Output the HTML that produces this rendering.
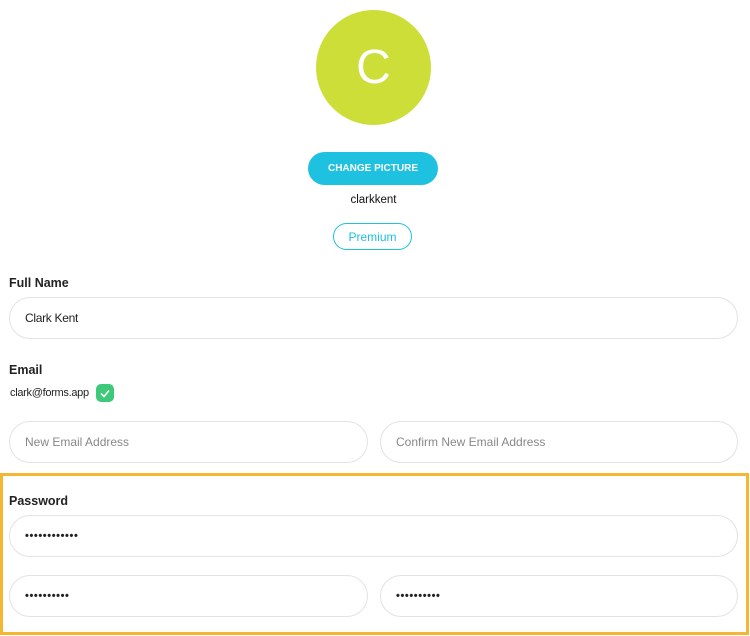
<!DOCTYPE html><html><head><style>
body{margin:0;width:750px;height:636px;background:#fff;font-family:"Liberation Sans",sans-serif;position:relative;overflow:hidden}
.a{position:absolute}
.in{position:absolute;border:1px solid #e3e3e3;border-radius:22px;box-sizing:border-box;font-size:12px;color:#222;padding-left:15px;display:flex;align-items:center}
.lb{position:absolute;left:9px;font-size:12.5px;font-weight:bold;color:#222}
.ph{color:#888;font-size:12px}
.dots{letter-spacing:0.6px;font-size:11px;font-weight:bold}
</style></head><body>
<div class="a" style="left:316px;top:10px;width:115px;height:115px;border-radius:50%;background:#cede38;color:#fff;font-size:48px;display:flex;align-items:center;justify-content:center">C</div>
<div class="a" style="left:308px;top:152px;width:130px;height:33px;border-radius:17px;background:#1ec1df;color:#fff;font-size:10px;font-weight:bold;display:flex;align-items:center;justify-content:center">CHANGE PICTURE</div>
<div class="a" style="left:0;width:747px;top:194px;text-align:center;font-size:11.5px;color:#111">clarkkent</div>
<div class="a" style="left:333px;top:223px;width:79px;height:27px;box-sizing:border-box;border:1px solid #1ec1df;border-radius:14px;color:#1ec1df;font-size:12px;display:flex;align-items:center;justify-content:center">Premium</div>
<div class="lb" style="top:276px">Full Name</div>
<div class="in" style="left:9px;top:297px;width:729px;height:42px;letter-spacing:-0.3px">Clark Kent</div>
<div class="lb" style="top:363px">Email</div>
<div class="a" style="left:10px;top:387px;font-size:11px;color:#222;letter-spacing:-0.3px">clark@forms.app</div>
<div class="a" style="left:96px;top:384px;width:18px;height:18px;border-radius:5px;background:#3ec97a"><svg width="18" height="18"><path d="M5 9.5l3 3 5-6" stroke="#fff" stroke-width="1.6" fill="none"/></svg></div>
<div class="in ph" style="left:9px;top:421px;width:359px;height:42px">New Email Address</div>
<div class="in ph" style="left:380px;top:421px;width:358px;height:42px">Confirm New Email Address</div>
<div class="a" style="left:0;top:473px;width:749px;height:162px;box-sizing:border-box;border:3px solid #f5b731"></div>
<div class="lb" style="top:494px">Password</div>
<div class="in dots" style="left:9px;top:515px;width:729px;height:42px">••••••••••••</div>
<div class="in dots" style="left:9px;top:575px;width:359px;height:42px">••••••••••</div>
<div class="in dots" style="left:380px;top:575px;width:358px;height:42px">••••••••••</div>
</body></html>
